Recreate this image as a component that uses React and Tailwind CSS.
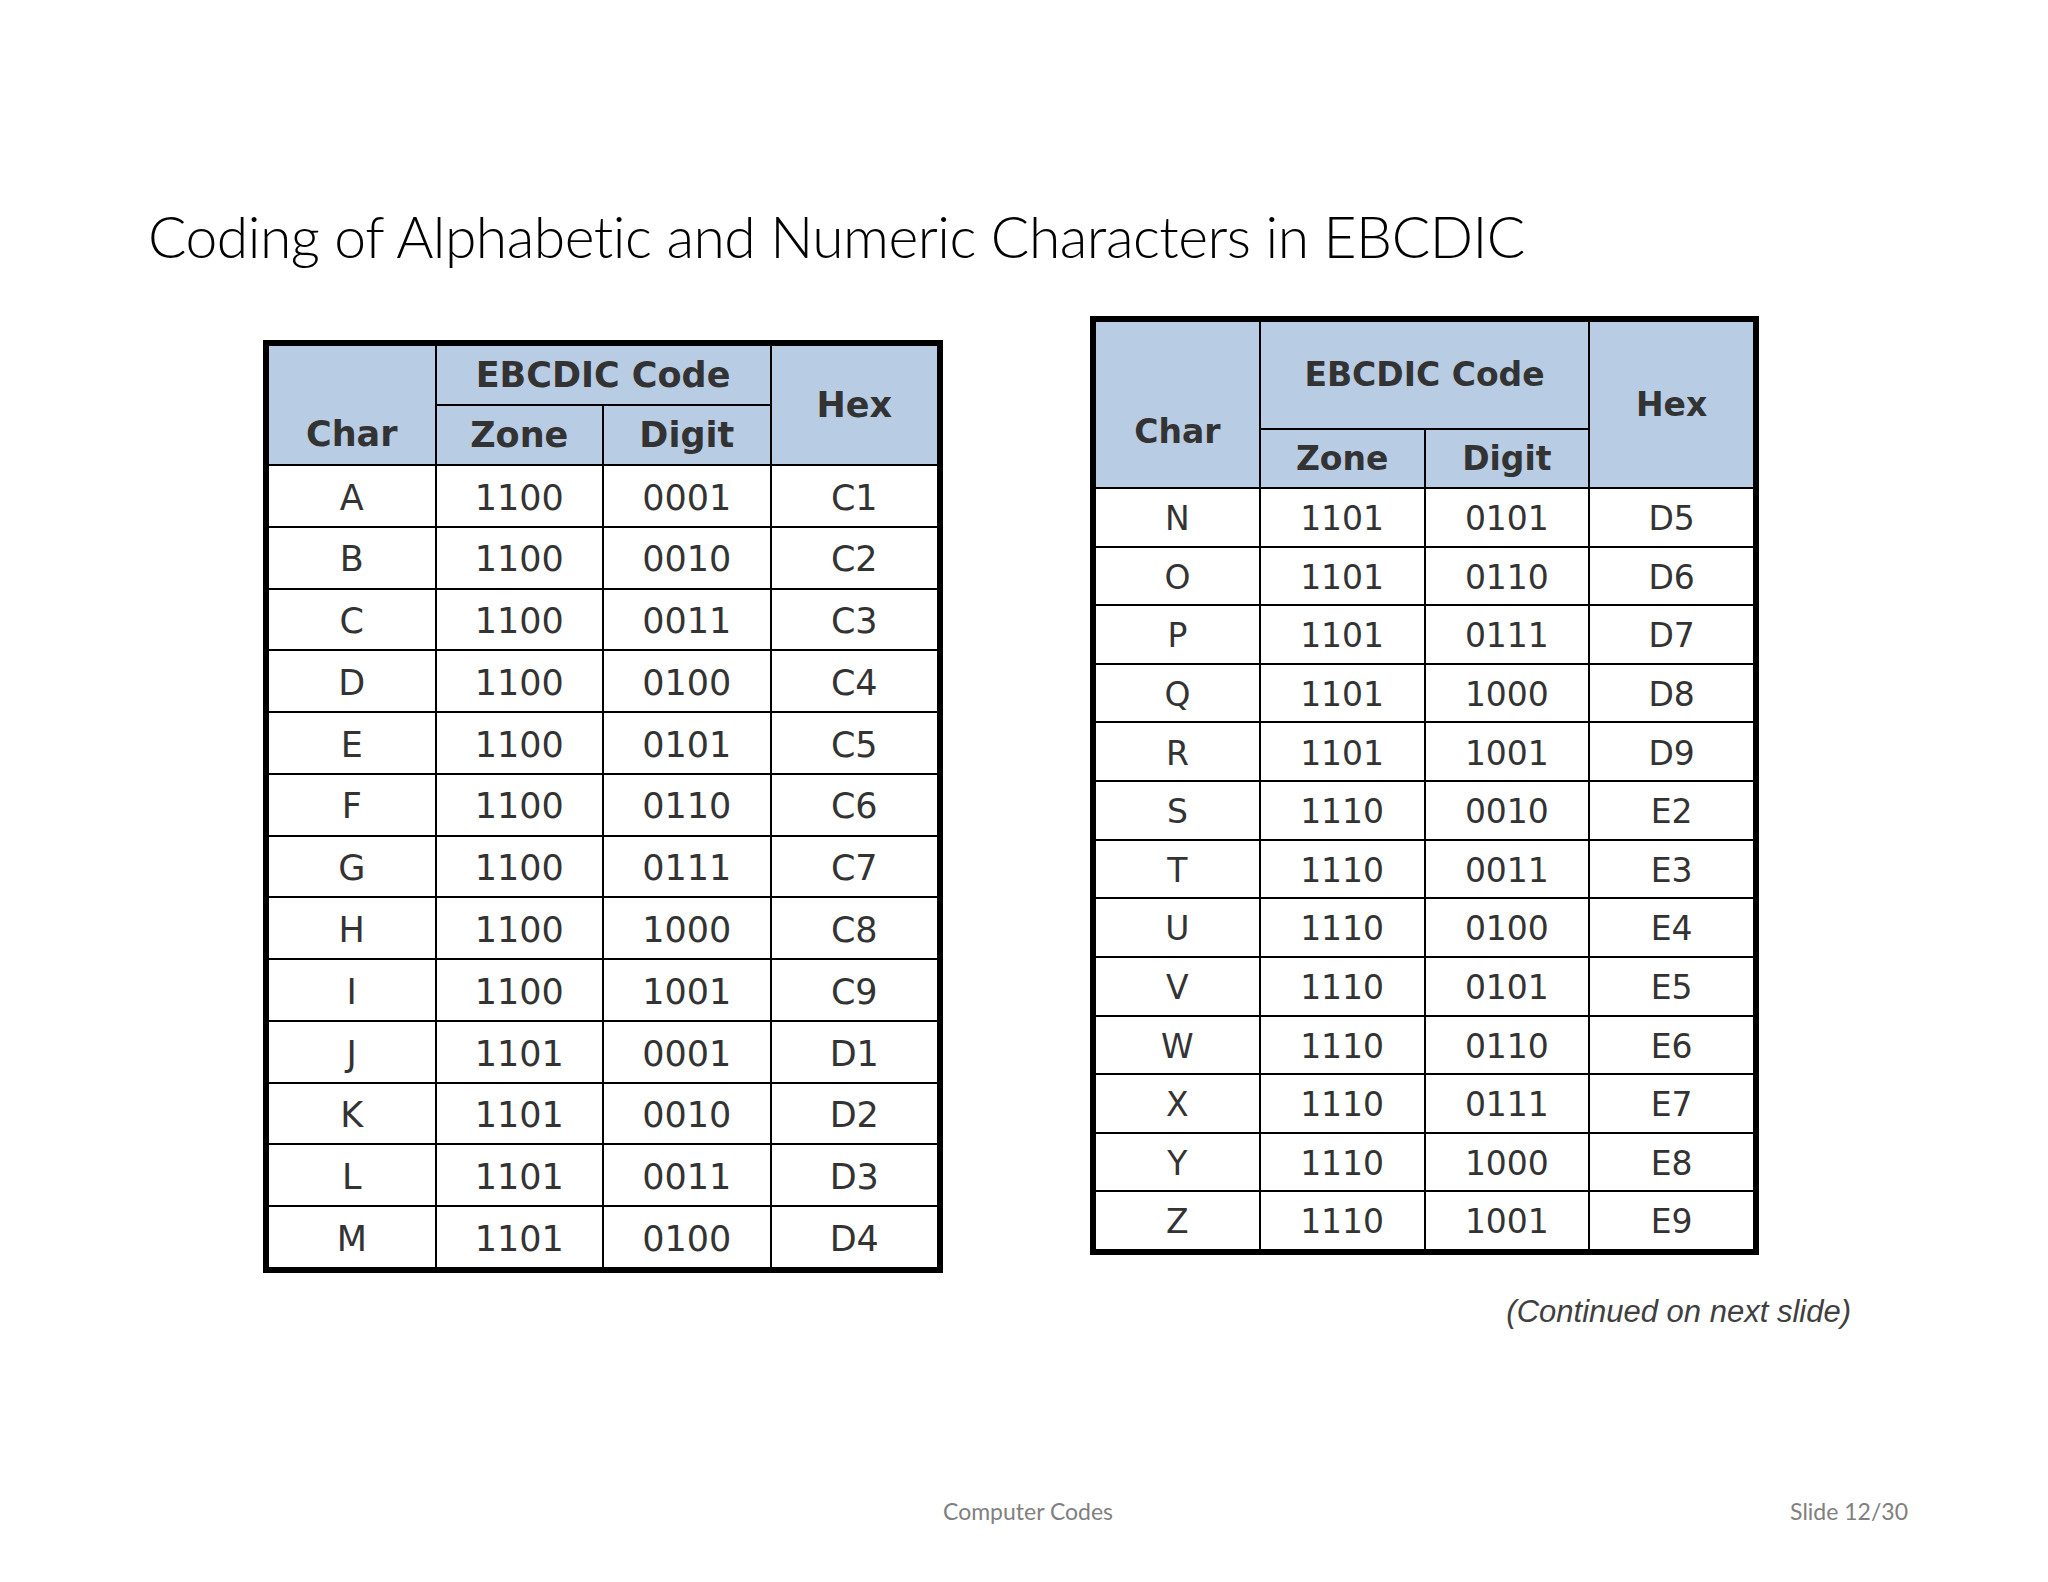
import React from "react";

const leftRows = [
  ["A", "1100", "0001", "C1"],
  ["B", "1100", "0010", "C2"],
  ["C", "1100", "0011", "C3"],
  ["D", "1100", "0100", "C4"],
  ["E", "1100", "0101", "C5"],
  ["F", "1100", "0110", "C6"],
  ["G", "1100", "0111", "C7"],
  ["H", "1100", "1000", "C8"],
  ["I", "1100", "1001", "C9"],
  ["J", "1101", "0001", "D1"],
  ["K", "1101", "0010", "D2"],
  ["L", "1101", "0011", "D3"],
  ["M", "1101", "0100", "D4"],
];

const rightRows = [
  ["N", "1101", "0101", "D5"],
  ["O", "1101", "0110", "D6"],
  ["P", "1101", "0111", "D7"],
  ["Q", "1101", "1000", "D8"],
  ["R", "1101", "1001", "D9"],
  ["S", "1110", "0010", "E2"],
  ["T", "1110", "0011", "E3"],
  ["U", "1110", "0100", "E4"],
  ["V", "1110", "0101", "E5"],
  ["W", "1110", "0110", "E6"],
  ["X", "1110", "0111", "E7"],
  ["Y", "1110", "1000", "E8"],
  ["Z", "1110", "1001", "E9"],
];

const styles = {
  left: {
    grid: "grid grid-cols-4 grid-rows-[58px_58px_repeat(13,minmax(0,1fr))] gap-[2px] bg-black border-[6px] border-black w-[680px] h-[933px] mt-[24px]",
    head: "bg-[#b8cce4] flex items-center justify-center font-bold text-[35px] text-[#333333]",
    charHead: "row-span-2 bg-[#b8cce4] flex items-center justify-center pt-[58px] font-bold text-[35px] text-[#333333]",
    body: "bg-white flex items-center justify-center pt-[4px] text-[35px] text-[#333333]",
  },
  right: {
    grid: "grid grid-cols-4 grid-rows-[106px_57px_repeat(13,minmax(0,1fr))] gap-[2px] bg-black border-[6px] border-black w-[669px] h-[939px]",
    head: "bg-[#b8cce4] flex items-center justify-center font-bold text-[33px] text-[#333333]",
    charHead: "row-span-2 bg-[#b8cce4] flex items-center justify-center pt-[54px] font-bold text-[33px] text-[#333333]",
    body: "bg-white flex items-center justify-center pt-[3px] text-[33px] text-[#333333]",
  },
};

function CodeTable({ rows, variant }) {
  const s = styles[variant];
  return (
    <div className={s.grid} style={{ fontFamily: '"DejaVu Sans", Verdana, sans-serif' }}>
      <div className={s.charHead}>Char</div>
      <div className={"col-span-2 " + s.head}>EBCDIC Code</div>
      <div className={"row-span-2 " + s.head}>Hex</div>
      <div className={s.head}>Zone</div>
      <div className={s.head}>Digit</div>
      {rows.map((r) =>
        r.map((cell, i) => (
          <div key={r[0] + i} className={s.body}>
            {cell}
          </div>
        ))
      )}
    </div>
  );
}

export default function App() {
  return (
    <div className="w-[2048px] h-[1582px] bg-white flex flex-col overflow-hidden">
      <div className="h-[316px] pl-[148px] pt-[208px]">
        <h1
          className="text-[57px] leading-none font-light text-black tracking-[-0.5px]"
          style={{ fontFamily: 'Lato, "Open Sans", sans-serif' }}
        >
          Coding of Alphabetic and Numeric Characters in EBCDIC
        </h1>
      </div>
      <div className="flex items-start pl-[263px] gap-[147px]">
        <CodeTable rows={leftRows} variant="left" />
        <CodeTable rows={rightRows} variant="right" />
      </div>
      <div className="flex justify-end pr-[197px] mt-[18px] h-[40px] items-center">
        <span
          className="italic text-[31px] text-[#404040] leading-none"
          style={{ fontFamily: '"Liberation Sans", Arial, sans-serif' }}
        >
          (Continued on next slide)
        </span>
      </div>
      <div
        className="mt-[165px] h-[30px] flex items-center text-[23px] text-[#808080]"
        style={{ fontFamily: 'Lato, "Open Sans", sans-serif' }}
      >
        <span className="ml-[943px]">Computer Codes</span>
        <span className="ml-auto mr-[140px]">Slide 12/30</span>
      </div>
    </div>
  );
}
